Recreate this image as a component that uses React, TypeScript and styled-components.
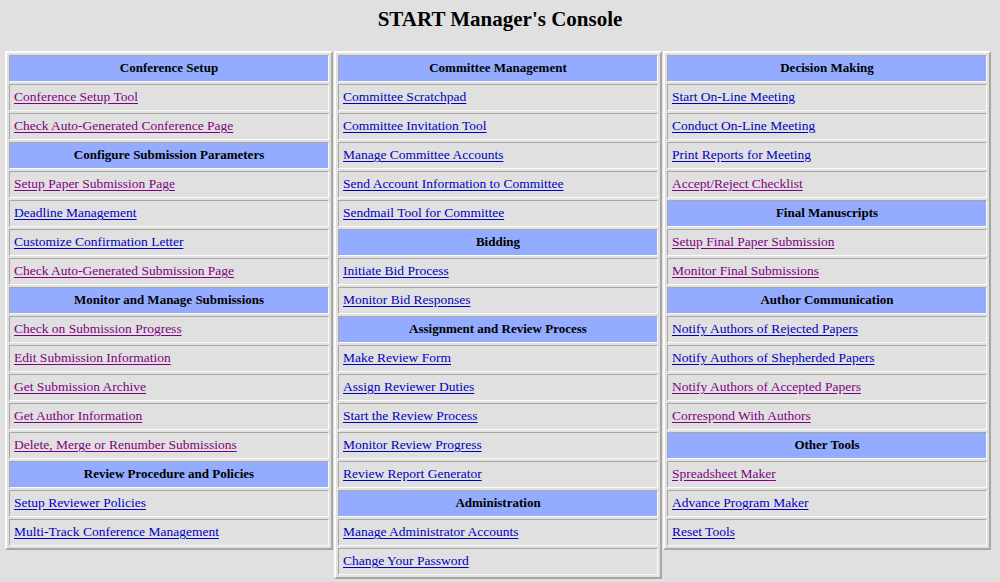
import React from 'react';
import styled, { createGlobalStyle } from 'styled-components';

const GlobalStyle = createGlobalStyle`
  html, body {
    margin: 0;
    padding: 0;
    background: #e0e0e0;
  }
  body {
    font-family: "Liberation Serif", "Times New Roman", serif;
    font-size: 13px;
    color: #000;
  }
`;

const Page = styled.div`
  width: 1000px;
  height: 582px;
  overflow: hidden;
  background: #e0e0e0;
`;

const Title = styled.h1`
  margin: 0;
  padding-top: 7px;
  height: 51px;
  box-sizing: border-box;
  text-align: center;
  font-size: 21px;
  font-weight: bold;
  line-height: 24px;
`;

const Columns = styled.div`
  display: flex;
  align-items: flex-start;
  gap: 1px;
  padding-left: 5px;
`;

const Panel = styled.div`
  width: 328px;
  box-sizing: border-box;
  display: flex;
  flex-direction: column;
  gap: 2px;
  padding: 2px;
  border: 2px solid;
  border-color: #fbfbfb #a9a8a0 #a9a8a0 #fbfbfb;
`;

const Cell = styled.div<{ $header?: boolean }>`
  height: 27px;
  box-sizing: border-box;
  display: flex;
  align-items: center;
  justify-content: ${(p) => (p.$header ? 'center' : 'flex-start')};
  padding: 0 4px 1px;
  border: 1px solid;
  border-color: #a9a8a0 #fbfbfb #fbfbfb #a9a8a0;
  background: ${(p) => (p.$header ? '#94acff' : 'transparent')};
  font-weight: ${(p) => (p.$header ? 'bold' : 'normal')};
  font-size: ${(p) => (p.$header ? '13px' : '13.5px')};
  white-space: nowrap;
`;

const Link = styled.a<{ $visited?: boolean }>`
  color: ${(p) => (p.$visited ? '#800080' : '#0000c0')};
  text-decoration: underline;
  text-underline-offset: 2px;
  cursor: pointer;
`;

type Row = { h: string } | { l: string; v?: boolean };

const columns: Row[][] = [
  [
    { h: 'Conference Setup' },
    { l: 'Conference Setup Tool', v: true },
    { l: 'Check Auto-Generated Conference Page', v: true },
    { h: 'Configure Submission Parameters' },
    { l: 'Setup Paper Submission Page', v: true },
    { l: 'Deadline Management' },
    { l: 'Customize Confirmation Letter' },
    { l: 'Check Auto-Generated Submission Page', v: true },
    { h: 'Monitor and Manage Submissions' },
    { l: 'Check on Submission Progress', v: true },
    { l: 'Edit Submission Information', v: true },
    { l: 'Get Submission Archive', v: true },
    { l: 'Get Author Information', v: true },
    { l: 'Delete, Merge or Renumber Submissions', v: true },
    { h: 'Review Procedure and Policies' },
    { l: 'Setup Reviewer Policies' },
    { l: 'Multi-Track Conference Management' },
  ],
  [
    { h: 'Committee Management' },
    { l: 'Committee Scratchpad' },
    { l: 'Committee Invitation Tool' },
    { l: 'Manage Committee Accounts' },
    { l: 'Send Account Information to Committee' },
    { l: 'Sendmail Tool for Committee' },
    { h: 'Bidding' },
    { l: 'Initiate Bid Process' },
    { l: 'Monitor Bid Responses' },
    { h: 'Assignment and Review Process' },
    { l: 'Make Review Form' },
    { l: 'Assign Reviewer Duties' },
    { l: 'Start the Review Process' },
    { l: 'Monitor Review Progress' },
    { l: 'Review Report Generator' },
    { h: 'Administration' },
    { l: 'Manage Administrator Accounts' },
    { l: 'Change Your Password' },
  ],
  [
    { h: 'Decision Making' },
    { l: 'Start On-Line Meeting' },
    { l: 'Conduct On-Line Meeting' },
    { l: 'Print Reports for Meeting' },
    { l: 'Accept/Reject Checklist', v: true },
    { h: 'Final Manuscripts' },
    { l: 'Setup Final Paper Submission', v: true },
    { l: 'Monitor Final Submissions', v: true },
    { h: 'Author Communication' },
    { l: 'Notify Authors of Rejected Papers' },
    { l: 'Notify Authors of Shepherded Papers' },
    { l: 'Notify Authors of Accepted Papers', v: true },
    { l: 'Correspond With Authors', v: true },
    { h: 'Other Tools' },
    { l: 'Spreadsheet Maker', v: true },
    { l: 'Advance Program Maker' },
    { l: 'Reset Tools' },
  ],
];

export default function App() {
  return (
    <Page>
      <GlobalStyle />
      <Title>START Manager's Console</Title>
      <Columns>
        {columns.map((rows, ci) => (
          <Panel key={ci}>
            {rows.map((r, ri) =>
              'h' in r ? (
                <Cell key={ri} $header>
                  {r.h}
                </Cell>
              ) : (
                <Cell key={ri}>
                  <Link $visited={r.v}>{r.l}</Link>
                </Cell>
              )
            )}
          </Panel>
        ))}
      </Columns>
    </Page>
  );
}
